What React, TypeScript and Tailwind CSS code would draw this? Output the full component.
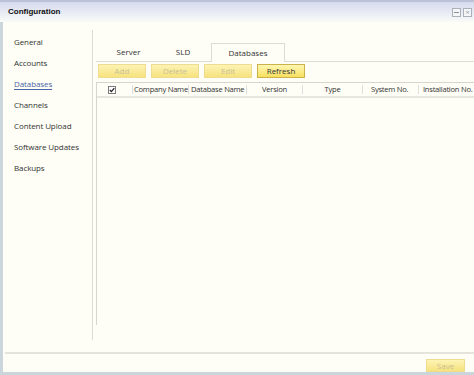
import React from 'react';

const navItems = ['General', 'Accounts', 'Databases', 'Channels', 'Content Upload', 'Software Updates', 'Backups'];

const columns = [
  { label: 'Company Name', width: 'w-[56px]', align: 'pl-[1px]' },
  { label: 'Database Name', width: 'w-[58px]', align: 'pl-[2px]' },
  { label: 'Version', width: 'w-[56px]', align: 'justify-center' },
  { label: 'Type', width: 'w-[60px]', align: 'justify-center' },
  { label: 'System No.', width: 'w-[56px]', align: 'pl-[8px]' },
  { label: 'Installation No.', width: 'w-[60px]', align: 'pl-[4px]' },
];

function ToolButton({ label, enabled }: { label: string; enabled?: boolean }) {
  return (
    <div
      className={
        enabled
          ? 'flex h-[14px] w-[48px] items-center justify-center border border-[#cdb24a] bg-gradient-to-b from-[#fff7b0] to-[#f7df5c] text-[#333333]'
          : 'flex h-[14px] w-[48px] items-center justify-center border border-[#eedd90] bg-gradient-to-b from-[#fdf3b4] to-[#f6e27c] text-[#c9bf96]'
      }
    >
      {label}
    </div>
  );
}

export default function App() {
  return (
    <div
      className="flex h-[375px] w-[474px] flex-col overflow-hidden bg-[#fefef6] text-[8px] text-[#333333]"
      style={{ fontFamily: '"Open Sans", "Noto Sans", sans-serif' }}
    >
      {/* title bar */}
      <div className="flex h-[22px] shrink-0 items-center justify-between border-t-2 border-[#b9c2d6] bg-gradient-to-b from-[#d6daef] to-[#f9fbf7] pl-[8px] pr-[2px]">
        <span className="text-[8px] font-bold text-[#111111]" style={{ fontFamily: '"Liberation Sans", Arial, sans-serif' }}>
          Configuration
        </span>
        <div className="flex gap-[2px] text-[#9aa2ad]">
          <div className="flex h-[9px] w-[9px] items-center justify-center border border-[#aab1bb] bg-[#f4f6f8]">
            <div className="h-px w-[5px] bg-[#8a929c]" />
          </div>
          <div className="flex h-[9px] w-[9px] items-center justify-center border border-[#aab1bb] bg-[#f4f6f8] text-[8px] leading-none">
            ×
          </div>
        </div>
      </div>

      <div className="flex flex-1 flex-col border-l-[3px] border-[#cbd6dc]">
        {/* body */}
        <div className="flex h-[330px] pt-[8px] pb-[12px]">
          <nav className="flex w-[89px] shrink-0 flex-col pt-[1px] pl-[11px] tracking-[-0.1px]">
            {navItems.map((item) => (
              <div
                key={item}
                className={
                  item === 'Databases'
                    ? 'flex h-[21px] items-center text-[#4a63a6] underline underline-offset-2'
                    : 'flex h-[21px] items-center'
                }
              >
                {item}
              </div>
            ))}
          </nav>

          <div className="flex flex-1 flex-col border-l border-[#dcdcd4] pl-[3px]">
            {/* tabs */}
            <div className="mt-[13px] flex h-[19px] items-end">
              <div className="flex h-full w-[59px] items-center justify-center border-b border-[#dcdcd4] pl-[6px]">Server</div>
              <div className="flex h-full w-[56px] items-center justify-center border-b border-[#dcdcd4]">SLD</div>
              <div className="flex h-full w-[74px] items-center justify-center border border-b-0 border-[#dcdcd4] bg-[#fefef6]">
                Databases
              </div>
              <div className="h-full flex-1 border-b border-[#dcdcd4]" />
            </div>

            {/* toolbar */}
            <div className="mt-[2px] flex gap-[5px] pl-[2px]">
              <ToolButton label="Add" />
              <ToolButton label="Delete" />
              <ToolButton label="Edit" />
              <ToolButton label="Refresh" enabled />
            </div>

            {/* grid */}
            <div className="mt-[4px] mb-[15px] flex flex-1 flex-col border-t border-l border-[#d6d6ce]">
              <div className="flex h-[15px] items-center border-b-2 border-[#e6e6de] text-[7.6px] tracking-[-0.25px]">
                <div className="flex w-[35px] items-center pl-[11px]">
                  <div className="flex h-[8px] w-[8px] items-center justify-center border border-[#7a7a7a] bg-white">
                    <svg width="6" height="6" viewBox="0 0 6 6">
                      <path d="M0.8 3 L2.4 4.6 L5.3 1.1" stroke="#222222" strokeWidth="1.3" fill="none" />
                    </svg>
                  </div>
                </div>
                {columns.map((col) => (
                  <div key={col.label} className={`flex h-[9px] ${col.width} shrink-0 items-center overflow-hidden whitespace-nowrap border-l border-[#dedede] ${col.align}`}>
                    {col.label}
                  </div>
                ))}
              </div>
            </div>
          </div>
        </div>

        {/* footer */}
        <div className="ml-[2px] flex flex-1 items-start justify-end border-t-2 border-[#e4e4dc] pt-[5px] pr-[9px]">
          <div className="flex h-[13px] w-[39px] items-center justify-center border border-[#eedd90] bg-gradient-to-b from-[#fdf3b4] to-[#f6e27c] text-[#c9bf96]">
            Save
          </div>
        </div>
        <div className="h-[3px] bg-[#cbd6dc]" />
      </div>
    </div>
  );
}
